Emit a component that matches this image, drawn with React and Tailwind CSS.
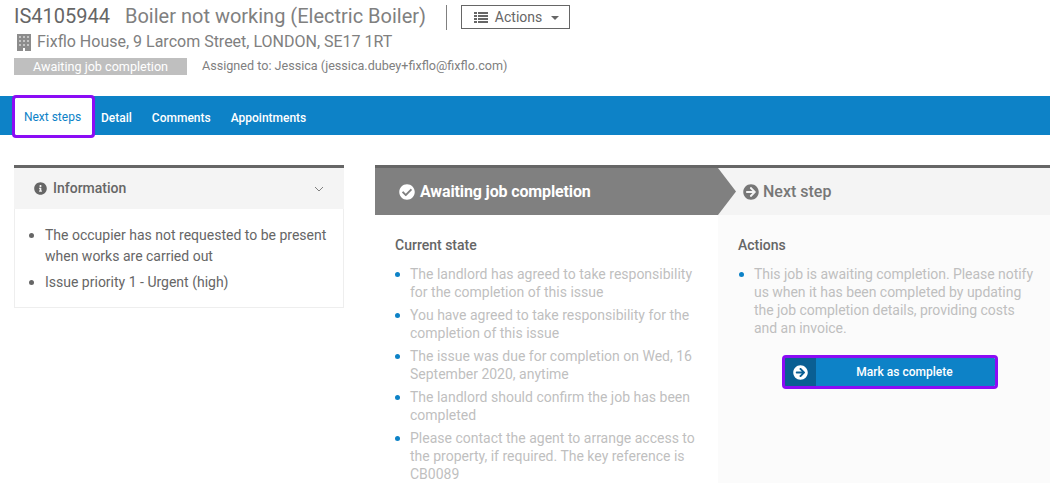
import { FaInfoCircle, FaCheckCircle, FaArrowCircleRight } from 'react-icons/fa'

const currentState = [
    'The landlord has agreed to take responsibility for the completion of this issue',
    'You have agreed to take responsibility for the completion of this issue',
    'The issue was due for completion on Wed, 16 September 2020, anytime',
    'The landlord should confirm the job has been completed',
    'Please contact the agent to arrange access to the property, if required. The key reference is CB0089',
]

function BlueItem({ children }) {
    return (
        <li className="flex mb-[5px]">
            <span className="w-[5px] h-[5px] rounded-full bg-[#0d82c7] mt-[7px] mr-[10px] shrink-0" />
            <span>{children}</span>
        </li>
    )
}

function ListIcon() {
    return (
        <svg className="mr-[7px]" width="14" height="13" viewBox="0 0 14 13" fill="#666666">
            <path d="M0 1h3v2H0zM4 1h10v2H4zM0 4h3v2H0zM4 4h10v2H4zM0 7h3v2H0zM4 7h10v2H4zM0 10h3v2H0zM4 10h10v2H4z" />
        </svg>
    )
}

function BuildingIcon() {
    return (
        <svg className="ml-[3px] mr-[6px]" width="14" height="17" viewBox="0 0 14 17">
            <path d="M0 0h14v17H8v-3H6v3H0z" fill="#8c8c8c" />
            <path d="M2 2h2v2H2zM6 2h2v2H6zM10 2h2v2h-2zM2 6h2v2H2zM6 6h2v2H6zM10 6h2v2h-2zM2 10h2v2H2zM6 10h2v2H6zM10 10h2v2h-2z" fill="#c4c4c4" />
        </svg>
    )
}

export default function App() {
    return (
        <div className="w-[1050px] h-[483px] overflow-hidden bg-white font-['Roboto',sans-serif]">
            <div className="h-[96px] pl-[14px]">
                <div className="flex items-center h-[32px] text-[20px] text-[#808080]">
                    <span className="text-[#666666]">IS4105944</span>
                    <span className="ml-[15px]">Boiler not working (Electric Boiler)</span>
                    <span className="w-px h-[25px] bg-[#808080] ml-[20px] mt-[3px]" />
                    <button className="ml-[14px] w-[109px] h-[24px] mt-[2px] pl-[2px] border border-[#666666] flex items-center justify-center text-[14px] text-[#666666]">
                        <ListIcon />
                        Actions
                        <span className="ml-[9px] mt-[1px] border-x-[4px] border-x-transparent border-t-[4px] border-t-[#666666]" />
                    </button>
                </div>
                <div className="flex items-center h-[20px] text-[16px] text-[#808080]">
                    <BuildingIcon />
                    Fixflo House, 9 Larcom Street, LONDON, SE17 1RT
                </div>
                <div className="flex items-center mt-[5px] text-[12.6px]">
                    <span className="w-[173px] h-[17px] bg-[#bfbfbf] text-white text-center leading-[17px]">Awaiting job completion</span>
                    <span className="ml-[15px] text-[#808080]">Assigned to: Jessica (jessica.dubey+fixflo@fixflo.com)</span>
                </div>
            </div>

            <div className="h-[39px] bg-[#0d82c7] flex items-stretch pl-[15px] text-[12px] font-medium text-white">
                <div className="relative w-[77px] h-[37px] mt-[2px] pr-[2px] bg-white text-[#0d82c7] font-normal flex items-center justify-center outline-[3px] outline-[#8b0cf5] rounded-[1px]">
                    Next steps
                </div>
                <div className="flex items-center ml-[9px] gap-[20px] pt-[4px]">
                    <span>Detail</span>
                    <span>Comments</span>
                    <span>Appointments</span>
                </div>
            </div>

            <div className="flex pl-[14px] pt-[30px]">
                <div className="w-[330px] self-start border border-[#eeeeee] border-t-0">
                    <div className="h-[44px] border-t-[3px] border-[#666666] bg-[#f4f4f4] flex items-center pl-[20px] pr-[20px] -mx-px text-[14px] font-medium text-[#666666]">
                        <FaInfoCircle className="text-[13px] mr-[6px]" />
                        <span>Information</span>
                        <svg className="ml-auto" width="10" height="6" viewBox="0 0 10 6" fill="none" stroke="#808080" strokeWidth="1">
                            <path d="M1 1l4 4 4-4" />
                        </svg>
                    </div>
                    <ul className="pt-[16px] pb-[14px] pl-[14px] pr-[8px] text-[14px] leading-[21px] text-[#666666]">
                        <li className="flex mb-[5px]">
                            <span className="w-[5px] h-[5px] rounded-full bg-[#666666] mt-[8px] mr-[11px] shrink-0" />
                            <span>The occupier has not requested to be present when works are carried out</span>
                        </li>
                        <li className="flex">
                            <span className="w-[5px] h-[5px] rounded-full bg-[#666666] mt-[8px] mr-[11px] shrink-0" />
                            <span>Issue priority 1 - Urgent (high)</span>
                        </li>
                    </ul>
                </div>

                <div className="ml-[31px] flex-1 border-t-[3px] border-[#666666]">
                    <div className="flex h-[47px]">
                        <div className="relative w-[343px] bg-[#808080] flex items-center pl-[24px] text-[16px] font-bold tracking-[-0.13px] text-white">
                            <FaCheckCircle className="text-[16px] mr-[5px]" />
                            Awaiting job completion
                            <svg className="absolute left-full top-0 h-[47px] w-[18px]" viewBox="0 0 18 47">
                                <path d="M0 0 L18 23.5 L0 47 Z" fill="#808080" />
                            </svg>
                        </div>
                        <div className="flex-1 bg-[#f4f4f4] flex items-center pl-[25px] text-[16px] font-medium text-[#777777]">
                            <FaArrowCircleRight className="text-[16px] mr-[4px]" />
                            Next step
                        </div>
                    </div>
                    <div className="flex">
                        <div className="w-[343px] pl-[20px] pr-[20px] pt-[22px]">
                            <h3 className="text-[14px] font-medium text-[#666666] leading-[17px] mb-[11px]">Current state</h3>
                            <ul className="text-[14px] leading-[18px] text-[#bfbfbf]">
                                {currentState.map((item) => (
                                    <BlueItem key={item}>{item}</BlueItem>
                                ))}
                            </ul>
                        </div>
                        <div className="flex-1 bg-[#fbfbfb] pl-[20px] pr-[12px] pt-[22px] h-[300px]">
                            <h3 className="text-[14px] font-medium text-[#666666] leading-[17px] mb-[11px]">Actions</h3>
                            <ul className="pl-px text-[14px] tracking-[-0.04px] leading-[18px] text-[#bfbfbf]">
                                <BlueItem>This job is awaiting completion. Please notify us when it has been completed by updating the job completion details, providing costs and an invoice.</BlueItem>
                            </ul>
                            <button className="mt-[21px] ml-[47px] w-[210px] h-[28px] bg-[#0d82c7] outline-[3px] outline-[#8b0cf5] rounded-[1px] flex items-stretch text-[12px] font-medium text-white">
                                <span className="w-[31px] bg-[#0a5f93] flex items-center justify-center">
                                    <FaArrowCircleRight className="text-[15px]" />
                                </span>
                                <span className="flex-1 flex items-center justify-center pr-[2px]">Mark as complete</span>
                            </button>
                        </div>
                    </div>
                </div>
            </div>
        </div>
    )
}
